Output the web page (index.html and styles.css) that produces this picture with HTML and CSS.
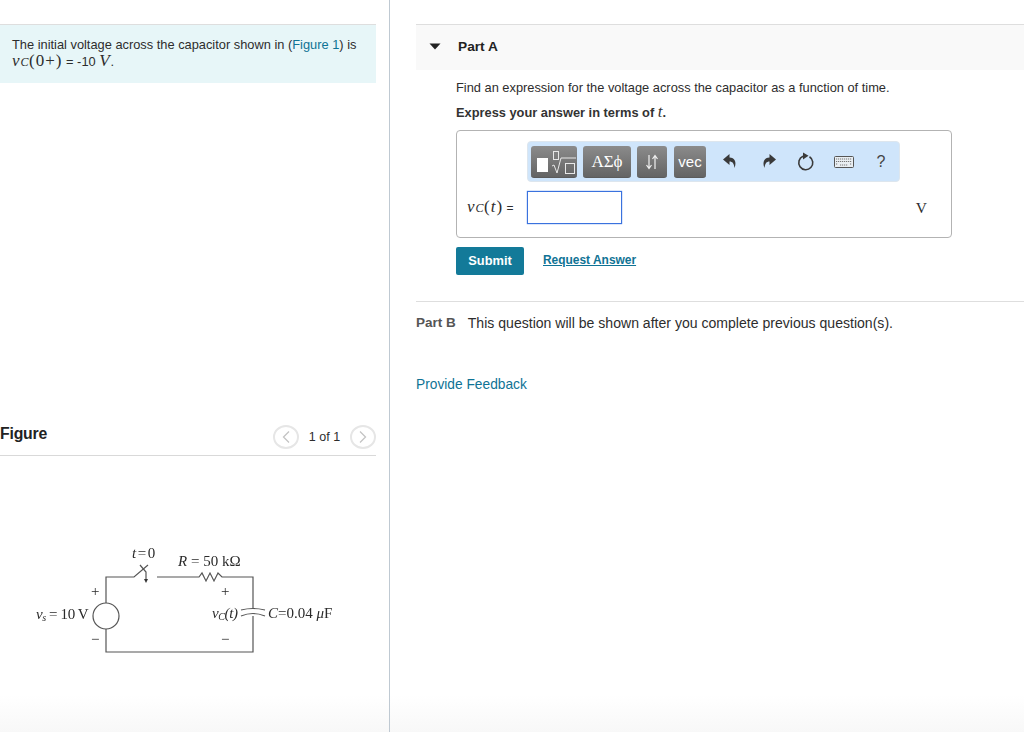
FILE: index.html
```html
<!DOCTYPE html>
<html lang="en">
<head>
<meta charset="utf-8">
<title>Part A</title>
<link rel="stylesheet" href="styles.css">
</head>
<body>
<div class="page">
  <section class="left">
    <div class="intro">
      <p>The initial voltage across the capacitor shown in (<a class="link">Figure 1</a>) is<br><span class="math"><i class="v">v</i><i class="c">C</i>(0+)</span> = -10 <span class="math"><i>V</i></span>.</p>
    </div>
    <div class="figure-head">
      <h2>Figure</h2>
      <div class="pager">
        <span class="circle"><svg width="10" height="14" viewBox="0 0 10 14"><path d="M8 1.500 2.500 7 8 12.500" class="chev"/></svg></span>
        <span class="count">1 of 1</span>
        <span class="circle"><svg width="10" height="14" viewBox="0 0 10 14"><path d="M2 1.500 7.500 7 2 12.500" class="chev"/></svg></span>
      </div>
    </div>
    <svg class="circuit" width="376" height="130" viewBox="0 0 376 130">
      <g class="wire">
        <path d="M106 69V43H134L148 31"/>
        <path d="M157 43H199L202 39 206 47 210 39 214 47 218 39 222 43H253V74"/>
        <path d="M106 95V118H253V82"/>
        <circle cx="106" cy="82" r="13"/>
        <path d="M241 76Q253 73 265 76M241 82Q253 77 265 82"/>
        <path d="M140 31 146 38V46"/>
      </g>
      <path class="solid" d="M144 45h4l-2 4z"/>
      <g class="ctext">
        <text class="wide" x="132" y="24"><tspan class="it">t</tspan>=0</text>
        <text x="178" y="32"><tspan class="it">R</tspan> = 50 kΩ</text>
        <text class="tight" x="36" y="85"><tspan class="it">v<tspan class="sub" dy="2">s</tspan></tspan><tspan dy="-2"> = 10 V</tspan></text>
        <text class="tight" x="212" y="84"><tspan class="it">v<tspan class="sub" dy="2">C</tspan><tspan dy="-2">(t)</tspan></tspan></text>
        <text x="268" y="84"><tspan class="it">C</tspan>=0.04 <tspan class="it">μ</tspan>F</text>
        <text x="91" y="62">+</text>
        <text x="221" y="62">+</text>
        <text x="91" y="110">−</text>
        <text x="221" y="110">−</text>
      </g>
    </svg>
  </section>
  <section class="right">
    <header class="part-head">
      <svg class="caret" width="12" height="7" viewBox="0 0 12 7"><path d="M0.500 0.500h11L6 6.500z"/></svg>
      <h2>Part A</h2>
    </header>
    <div class="part-body">
      <p class="q">Find an expression for the voltage across the capacitor as a function of time.</p>
      <p class="q strong">Express your answer in terms of <span class="math"><i>t</i></span>.</p>
      <div class="answer">
        <div class="toolbar">
          <span class="tb tb-tmpl">
            <svg width="46" height="31" viewBox="0 0 46 31">
              <rect x="6" y="12" width="11" height="14" fill="#fff"/>
              <g class="tmpl">
                <rect x="22.500" y="5.500" width="5" height="8"/>
                <path d="M21 20l2-1 3 8 4-15H45"/>
                <rect x="34.500" y="17.500" width="9" height="10"/>
              </g>
            </svg>
          </span>
          <span class="tb tb-greek">ΑΣϕ</span>
          <span class="tb tb-arrows">
            <svg width="14" height="16" viewBox="0 0 14 16">
              <path class="arrow" d="M4 1v13M1.500 11 4 14.500 6.500 11M10 15V2M7.500 5 10 1.500 12.500 5"/>
            </svg>
          </span>
          <span class="tb tb-vec">vec</span>
          <span class="tool tool-undo"><svg width="16" height="15" viewBox="0 0 16 15"><path class="solid-d" d="M7.500 0 1 5.500 7.500 11V7.500C10.500 7.500 12 9.500 12.500 14 15 8 12.500 3.500 7.500 3.500z"/></svg></span>
          <span class="tool tool-redo"><svg width="16" height="15" viewBox="0 0 16 15"><path class="solid-d" d="M8.500 0 15 5.500 8.500 11V7.500C5.500 7.500 4 9.500 3.500 14 1 8 3.500 3.500 8.500 3.500z"/></svg></span>
          <span class="tool tool-reset"><svg width="18" height="19" viewBox="0 0 18 19"><path class="ring" d="M12.500 4.800A7 7 0 1 1 6 4.300"/><path class="solid-d" d="M6 0.500 11.500 3.800 6 7.500z"/></svg></span>
          <span class="tool tool-keys"><svg width="20" height="12" viewBox="0 0 20 12"><rect x="0.500" y="0.500" width="19" height="11" rx="1" class="kb"/><path class="kbk" d="M2 3h16M2 5.500h16M2 8h2M6 9h8M16 8h2"/></svg></span>
          <span class="tool tool-help">?</span>
        </div>
        <div class="answer-row">
          <span class="label"><span class="math"><i class="v">v</i><i class="c">C</i>(<i>t</i>)</span> =</span>
          <span class="input"></span>
          <span class="unit">V</span>
        </div>
      </div>
      <div class="actions">
        <button class="submit" type="button">Submit</button>
        <a class="request">Request Answer</a>
      </div>
    </div>
    <div class="part-b">
      <b>Part B</b><span>This question will be shown after you complete previous question(s).</span>
    </div>
    <a class="link feedback">Provide Feedback</a>
  </section>
</div>
</body>
</html>
```
FILE: styles.css
```css
* { box-sizing: border-box; }
html, body { margin: 0; height: 732px; overflow: hidden; }
body {
  font-family: "Liberation Sans", Arial, sans-serif;
  font-size: 12.830px;
  color: #2d2d2d;
}
p, h2 { margin: 0; }
.page {
  height: 732px;
  display: grid;
  grid-template-columns: 389px 1fr;
  background: linear-gradient(to bottom, #fff 0, #fff 695px, #f8f8f8 732px);
}
.link { color: #0f7395; }
.math { font-family: "Liberation Serif", "DejaVu Serif", serif; font-size: 17px; line-height: 0; letter-spacing: 1px; }
.v { letter-spacing: 1px; }
.c { font-size: 12px; letter-spacing: 0.5px; }

.left { padding-top: 24px; padding-right: 13px; }
.intro {
  height: 59px;
  background: #e7f6f8;
  border-top: 1px solid #dedede;
  padding: 11px 12px 0;
  line-height: 17px;
}
.figure-head {
  margin-top: 338px;
  height: 35px;
  display: flex;
  align-items: flex-start;
  justify-content: space-between;
  border-bottom: 1px solid #d9d9d9;
}
.figure-head h2 { font-size: 15.800px; line-height: 24px; margin-top: 1px; color: #222; letter-spacing: -0.2px; }
.pager { display: flex; align-items: center; margin-top: 4px; }
.circle {
  width: 26px;
  height: 24px;
  border: 2px solid #e6e6e6;
  border-radius: 50%;
  display: flex;
  align-items: center;
  justify-content: center;
}
.chev { fill: none; stroke: #c4c4c4; stroke-width: 1.300; }
.count { width: 51px; text-align: center; font-size: 12.500px; }
.circuit { display: block; margin-top: 78px; filter: blur(0.3px); }
.wire { fill: none; stroke: #555; stroke-width: 1.200; }
.solid { fill: #333; }
.ctext { font-family: "Liberation Serif", serif; font-size: 15px; fill: #2a2a2a; }
.wide { letter-spacing: 1.500px; }
.tight { letter-spacing: -0.4px; }
.it { font-style: italic; }
.sub { font-size: 10px; }

.right { border-left: 1px solid #bfc9d2; padding-top: 24px; padding-left: 26px; }
.part-head {
  height: 46px;
  background: #f9f9f9;
  border-top: 1px solid #dedede;
  display: flex;
  align-items: center;
  padding: 0 0 2px 13px;
  gap: 17px;
}
.part-head h2 { font-size: 13.700px; font-weight: bold; color: #222; }
.caret path { fill: #222; }
.part-body { padding: 9px 0 0 40px; width: 536px; }
.q { line-height: 17px; margin-bottom: 8px; }
.strong { font-weight: bold; color: #333; }
.strong .math { font-weight: normal; letter-spacing: 0; }
.answer {
  margin-top: 9px;
  height: 108px;
  border: 1px solid #b3b3b3;
  border-radius: 4px;
  padding-top: 10px;
}
.toolbar {
  margin-left: 70px;
  width: 373px;
  height: 41px;
  background: #cfe5fb;
  border: 1px solid #dde6ee;
  border-radius: 4px;
  display: flex;
  align-items: center;
  padding-left: 3px;
}
.tb {
  height: 32px;
  padding-top: 1px;
  border-radius: 3px;
  background: linear-gradient(to bottom, #8b8b8b, #646464);
  color: #fff;
  display: flex;
  align-items: center;
  justify-content: center;
  border-bottom: 1px solid #5b5b5b;
}
.tb-tmpl { width: 46px; margin-right: 6px; padding-top: 0; }
.tb-greek { width: 48px; margin-right: 6px; font-family: "Liberation Serif", serif; font-size: 17px; }
.tb-arrows { width: 30px; margin-right: 7px; }
.tb-vec { width: 32px; font-size: 15px; padding-top: 0; }
.tmpl { fill: none; stroke: #e8e8e8; stroke-width: 1; }
.arrow { fill: none; stroke: #f0f0f0; stroke-width: 1.200; }
.tool { display: flex; align-items: center; justify-content: center; }
.tool-undo { margin-left: 15px; width: 18px; }
.tool-redo { margin-left: 21px; width: 18px; }
.tool-reset { margin-left: 19px; width: 18px; }
.tool-keys { margin-left: 19px; width: 20px; }
.tool-help { margin-left: 21px; width: 12px; font-size: 16px; color: #444; }
.solid-d { fill: #3a3a3a; }
.ring { fill: none; stroke: #3a3a3a; stroke-width: 1.600; }
.kb { fill: #e9eef2; stroke: #555; }
.kbk { fill: none; stroke: #777; stroke-width: 1.200; stroke-dasharray: 1.200 .8; }
.answer-row { display: flex; align-items: center; margin-top: 9px; height: 33px; }
.label { width: 70px; padding-left: 10px; font-size: 12px; white-space: nowrap; }
.input { width: 95px; height: 33px; border: 1px solid #3a72de; box-shadow: 0 0 1px #3a72de; background: #fff; }
.unit { margin-left: auto; margin-right: 24px; font-family: "Liberation Serif", serif; font-size: 15.500px; }
.actions { display: flex; align-items: center; margin-top: 9px; gap: 19px; }
.submit {
  width: 68px;
  height: 28px;
  border: 0;
  border-radius: 2px;
  background: #137a99;
  color: #fff;
  font: bold 12.830px "Liberation Sans", Arial, sans-serif;
  padding: 0 0 2px;
}
.request { color: #0f7395; font-weight: bold; font-size: 11.950px; text-decoration: underline; padding-bottom: 2px; }
.part-b {
  margin-top: 26px;
  border-top: 1px solid #dedede;
  padding-top: 13px;
  display: flex;
  gap: 12px;
  line-height: 16px;
  font-size: 14.070px;
}
.part-b b { font-size: 13.500px; color: #555; }
.feedback { display: block; margin-top: 46px; font-size: 13.750px; line-height: 16px; }
```
